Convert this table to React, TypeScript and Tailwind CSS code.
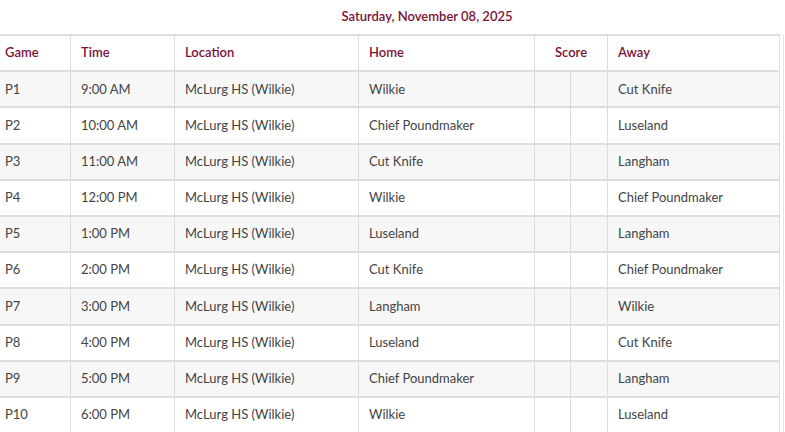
const games = [
  { id: "P1", time: "9:00 AM", home: "Wilkie", away: "Cut Knife" },
  { id: "P2", time: "10:00 AM", home: "Chief Poundmaker", away: "Luseland" },
  { id: "P3", time: "11:00 AM", home: "Cut Knife", away: "Langham" },
  { id: "P4", time: "12:00 PM", home: "Wilkie", away: "Chief Poundmaker" },
  { id: "P5", time: "1:00 PM", home: "Luseland", away: "Langham" },
  { id: "P6", time: "2:00 PM", home: "Cut Knife", away: "Chief Poundmaker" },
  { id: "P7", time: "3:00 PM", home: "Langham", away: "Wilkie" },
  { id: "P8", time: "4:00 PM", home: "Luseland", away: "Cut Knife" },
  { id: "P9", time: "5:00 PM", home: "Chief Poundmaker", away: "Langham" },
  { id: "P10", time: "6:00 PM", home: "Wilkie", away: "Luseland" },
];

const cell = "h-[36.2px] border-t-2 border-l border-[#dddddd] px-[10px] text-left align-middle";

export default function App() {
  return (
    <div className="w-[785px] h-[432px] overflow-hidden bg-white font-['Lato','Liberation_Sans',sans-serif] text-[13px]">
      <div className="ml-[69px] h-[34px] flex items-center justify-center pb-[1px] text-[13px] font-semibold text-[#7b1238]">
        Saturday, November 08, 2025
      </div>
      <div className="w-[784px] border-r border-[#e4e4e4]">
        <table className="w-[779px] border-separate border-spacing-0 table-fixed border-r border-[#dddddd]">
          <colgroup>
            <col className="w-[70px]" />
            <col className="w-[104px]" />
            <col className="w-[184px]" />
            <col className="w-[176px]" />
            <col className="w-[36px]" />
            <col className="w-[37px]" />
            <col className="w-[172px]" />
          </colgroup>
          <thead>
            <tr className="text-[#7b1238] font-semibold">
              <th className={cell + " !border-l-0 !pl-[5px] font-semibold"}>Game</th>
              <th className={cell + " font-semibold"}>Time</th>
              <th className={cell + " font-semibold"}>Location</th>
              <th className={cell + " font-semibold"}>Home</th>
              <th colSpan={2} className={cell + " !text-center font-semibold"}>Score</th>
              <th className={cell + " font-semibold"}>Away</th>
            </tr>
          </thead>
          <tbody className="text-[#444444]">
            {games.map((g, i) => (
              <tr key={g.id} className={i % 2 === 0 ? "bg-[#f7f7f7]" : "bg-white"}>
                <td className={cell + " !border-l-0 !pl-[5px]"}>{g.id}</td>
                <td className={cell}>{g.time}</td>
                <td className={cell}>McLurg HS (Wilkie)</td>
                <td className={cell}>{g.home}</td>
                <td className={cell}></td>
                <td className={cell}></td>
                <td className={cell}>{g.away}</td>
              </tr>
            ))}
          </tbody>
        </table>
      </div>
    </div>
  );
}
